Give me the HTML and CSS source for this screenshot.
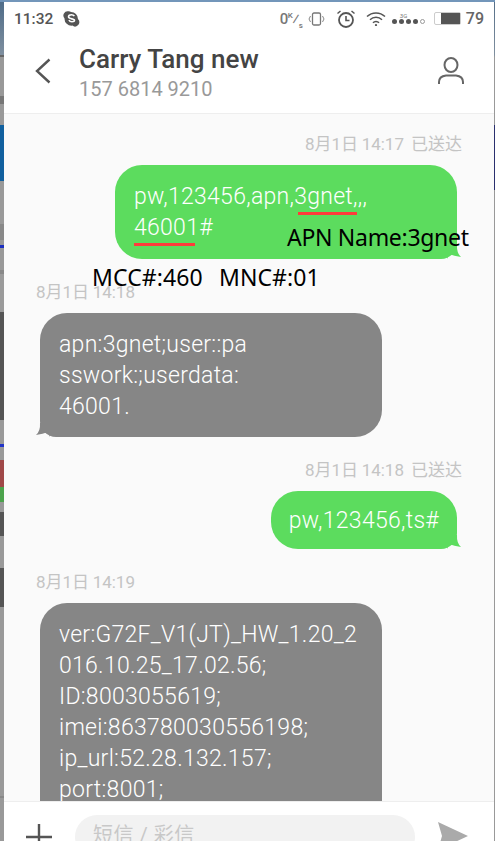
FILE: index.html
```html
<!DOCTYPE html>
<html lang="zh">
<head>
<meta charset="utf-8">
<title>Carry Tang new</title>
<link rel="stylesheet" href="styles.css">
</head>
<body>
<div class="desktop">
  <div class="edge edge-left"></div>
  <main class="phone">
    <div class="status">
      <span class="clock">11:32</span>
      <svg class="ic-skype" viewBox="0 0 16 16"><path d="M5 1.2a4 4 0 0 1 2.6.7 6.6 6.6 0 0 1 6.5 6.5 4 4 0 0 1-.1 6 4 4 0 0 1-5.200.3A6.600 6.600 0 0 1 1.400 7.800 4 4 0 0 1 5 1.200z" fill="#555"/><path d="M10.700 5.800C10 4.700 8.900 4.400 7.900 4.400c-1.500 0-2.700.8-2.700 2 0 2.500 5.600 1.400 5.600 3.300 0 .8-.9 1.300-2.400 1.300-1.300 0-2.300-.5-2.800-1.600" fill="none" stroke="#fff" stroke-width="1.500"/></svg>
      <span class="grow"></span>
      <span class="speed">0<sup>K</sup>⁄<sub>s</sub></span>
      <svg class="ic-vib" viewBox="0 0 17 14"><rect x="4.500" y="1" width="8" height="12" rx="1.500" fill="none" stroke="#777" stroke-width="1.300"/><path d="M2.500 4 1 7l1.500 3M14.500 4 16 7l-1.500 3" fill="none" stroke="#888"/></svg>
      <svg class="ic-alarm" viewBox="0 0 20 20"><circle cx="10" cy="11" r="7" fill="none" stroke="#555" stroke-width="1.800"/><path d="M10 7v4.500h3.500" fill="none" stroke="#555" stroke-width="1.600"/><path d="M1.500 4.500 4.500 2M18.500 4.500 15.500 2" stroke="#555" stroke-width="1.500"/></svg>
      <svg class="ic-wifi" viewBox="0 0 20 14"><path d="M1 4.500a13 13 0 0 1 18 0M4 7.800a8.500 8.500 0 0 1 12 0M7 10.800a4 4 0 0 1 6 0" fill="none" stroke="#555" stroke-width="1.500"/><circle cx="10" cy="13" r="1.100" fill="#555"/></svg>
      <span class="signal">
        <span class="net">3G</span>
        <span class="dots"><i class="dot"></i><i class="dot"></i><i class="dot"></i><i class="dot"></i><i class="dot dot-off"></i></span>
      </span>
      <span class="battery"><span class="battery-fill"></span></span>
      <span class="level">79</span>
    </div>
    <header class="head">
      <svg class="ic-back" viewBox="0 0 16 26"><path d="M14.500 1.500 2 13l12.500 11.500" fill="none" stroke="#555" stroke-width="2.400"/></svg>
      <div class="contact">
        <div class="name">Carry Tang new</div>
        <div class="number">157 6814 9210</div>
      </div>
      <svg class="ic-person" viewBox="0 0 26 28"><ellipse cx="13" cy="8" rx="6.500" ry="7" fill="none" stroke="#666" stroke-width="2"/><path d="M1 27v-2c0-4 3-6 7-6.500h10c4 .5 7 2.500 7 6.500v2" fill="none" stroke="#666" stroke-width="2"/></svg>
    </header>
    <section class="thread">
      <div class="stamp stamp-out">8月1日 14:17&nbsp; 已送达</div>
      <div class="bubble out wide">pw,123456,apn,3gnet,,,<br>46001#
        <svg class="tail tail-out" viewBox="0 0 14 14"><path d="M10 0Q9.500 8 14 12Q7 11 2 9L0 14V0z"/></svg>
      </div>
      <div class="stamp">8月1日 14:18</div>
      <div class="bubble in wide">apn:3gnet;user::pa<br>sswork:;userdata:<br>46001.
        <svg class="tail tail-in" viewBox="0 0 14 14"><path d="M4 0Q4.500 8 0 12Q7 11 12 9L14 14V0z"/></svg>
      </div>
      <div class="stamp stamp-out">8月1日 14:18&nbsp; 已送达</div>
      <div class="bubble out single">pw,123456,ts#
        <svg class="tail tail-out" viewBox="0 0 14 14"><path d="M10 0Q9.500 8 14 12Q7 11 2 9L0 14V0z"/></svg>
      </div>
      <div class="stamp">8月1日 14:19</div>
      <div class="bubble in wide">ver:G72F_V1(JT)_HW_1.20_2<br>016.10.25_17.02.56;<br>ID:8003055619;<br>imei:863780030556198;<br>ip_url:52.28.132.157;<br>port:8001;<br>&nbsp;</div>
    </section>
    <footer class="composer">
      <svg class="ic-plus" viewBox="0 0 26 26"><path d="M13 0v26M0 13h26" stroke="#555" stroke-width="2.400"/></svg>
      <div class="field">短信 / 彩信</div>
      <svg class="ic-send" viewBox="0 0 30 28"><path d="M0 0 30 14 0 28l4-14z" fill="#aaa"/></svg>
    </footer>
    <span class="mark mark-a"></span>
    <span class="mark mark-b"></span>
    <span class="note note-apn">APN Name:3gnet</span>
    <span class="note note-mcc">MCC#:460&nbsp; MNC#:01</span>
  </main>
  <div class="edge edge-right"></div>
</div>
</body>
</html>
```
FILE: styles.css
```css
html, body {
  margin: 0;
  height: 841px;
  overflow: hidden;
  background: #999;
}
.desktop {
  display: flex;
  height: 841px;
  padding-top: 2px;
  box-sizing: border-box;
  background: linear-gradient(#7396ba, #7396ba) top / 100% 2px no-repeat #999;
  font-family: Roboto, "Noto Sans CJK SC", sans-serif;
}
.edge {
  flex: none;
  align-self: stretch;
  margin-top: -2px;
}
.edge-left {
  width: 4px;
  background: linear-gradient(
    #6f93b8 0 2px, #4f6c88 2px, #7f8f9f 55px, #666 55px 57px, #999 57px 96px, #777 96px 104px, #999 104px 125px,
    #11609f 125px 181px, #999 181px 224px, #888 224px 240px, #999 240px 245px, #1c2fc0 245px 248px, #999 248px 270px,
    #888 270px 274px, #9a9a9a 274px 312px, #555 312px 420px, #999 420px 444px, #2233c8 444px 447px, #999 447px 460px,
    #a04848 460px 487px, #4ca34c 487px 502px, #999 502px 512px, #555 512px 536px, #999 536px 568px, #555 568px 607px,
    #999 607px 796px, #888 796px 798px, #999 798px
  );
}
.edge-right {
  width: 1px;
  background: linear-gradient(
    #6f93b8 0 2px, #566f88 2px, #7f8f9f 55px, #999 57px 125px, #2a2f6e 125px 190px, #999 190px
  );
}
.phone {
  position: relative;
  flex: 1;
  min-width: 0;
  display: flex;
  flex-direction: column;
  background: #fff;
}
.status {
  flex: none;
  height: 33px;
  display: flex;
  align-items: center;
  padding: 0 10px;
  color: #555;
}
.clock {
  font-size: 15.500px;
  font-weight: 500;
  margin-right: 10px;
}
.ic-skype { width: 17px; height: 17px; }
.grow { flex: 1; }
.speed {
  font-size: 15px;
  font-weight: 500;
  color: #777;
  letter-spacing: -.5px;
  width: 22px;
  white-space: nowrap;
}
.speed sup, .speed sub { font-size: 8px; line-height: 0; }
.ic-vib { width: 17px; height: 14px; margin-left: 6px; }
.ic-alarm { width: 20px; height: 20px; margin-left: 11px; }
.ic-wifi { width: 20px; height: 14px; margin-left: 10px; }
.signal {
  width: 35px;
  margin-left: 6px;
  display: flex;
  flex-direction: column;
  align-items: flex-start;
}
.net {
  font-size: 6px;
  line-height: 6px;
  margin-left: 8px;
  color: #777;
}
.dots { display: flex; gap: 2px; }
.dot {
  width: 5px;
  height: 5px;
  border-radius: 50%;
  background: #555;
  box-sizing: border-box;
}
.dot-off { background: #fff; border: 1px solid #999; }
.battery {
  width: 27px;
  height: 13px;
  margin-left: 7px;
  box-sizing: border-box;
  border: 1px solid #ccc;
  border-radius: 2px;
  display: flex;
  justify-content: flex-end;
}
.battery-fill { width: 19px; background: #555; }
.level {
  font-size: 16px;
  font-weight: 500;
  color: #666;
  margin-left: 5px;
}
.head {
  flex: none;
  height: 78px;
  display: flex;
  align-items: center;
  border-bottom: 1px solid #eee;
}
.ic-back { width: 16px; height: 26px; margin-left: 31px; margin-top: -6px; }
.contact { margin-left: 28px; flex: 1; }
.name {
  font-size: 26px;
  line-height: 30px;
  font-weight: 500;
  color: #444;
}
.number {
  font-size: 20px;
  line-height: 30px;
  color: #999;
}
.ic-person { width: 26px; height: 28px; margin-right: 30px; margin-top: -6px; }
.thread {
  flex: 1;
  min-height: 0;
  overflow: hidden;
  background: #fafafa;
  display: flex;
  flex-direction: column;
  align-items: flex-start;
  padding-top: 20px;
}
.stamp {
  flex: none;
  font-size: 17px;
  line-height: 20px;
  color: #c4c4c4;
  word-spacing: -.7px;
  margin: 0 0 11px 32px;
}
.stamp-out { align-self: flex-end; margin: 0 32px 11px 0; }
.bubble {
  flex: none;
  position: relative;
  box-sizing: border-box;
  font-size: 23px;
  font-weight: 300;
  letter-spacing: .28px;
  line-height: 31px;
  color: #fff;
  padding: 16px 19px;
  border-radius: 27px;
  margin-bottom: 23px;
}
.wide { width: 342px; }
.single { padding: 14px 18px 13px; }
.out {
  background: #5cdc5e;
  align-self: flex-end;
  margin-right: 37px;
  border-bottom-right-radius: 16px;
}
.in {
  background: #868686;
  margin-left: 36px;
  padding-bottom: 15px;
  border-bottom-left-radius: 16px;
}
.tail { position: absolute; width: 14px; height: 14px; bottom: 0; }
.tail-out { right: -4px; fill: #5cdc5e; }
.tail-in { left: -4px; fill: #868686; }
.composer {
  flex: none;
  height: 39px;
  overflow: hidden;
  border-top: 1px solid #eee;
  display: flex;
  align-items: flex-start;
  background: #fff;
}
.ic-plus { width: 26px; height: 26px; margin: 22px 0 0 22px; flex: none; }
.field {
  flex: none;
  width: 340px;
  height: 44px;
  margin: 13px 0 0 23px;
  padding: 7px 18px;
  box-sizing: border-box;
  border-radius: 22px;
  background: #f2f2f2;
  font-size: 20px;
  line-height: 26px;
  color: #c8c8c8;
  letter-spacing: .5px;
}
.ic-send { width: 30px; height: 28px; margin: 20px 0 0 23px; flex: none; }
.mark {
  position: absolute;
  height: 3px;
  background: #ff3b3b;
}
.mark-a { left: 130px; top: 241px; width: 61px; }
.mark-b { left: 294px; top: 210px; width: 59px; }
.note {
  position: absolute;
  font-family: "Noto Sans", sans-serif;
  font-size: 23px;
  line-height: 28px;
  color: #000;
  white-space: nowrap;
}
.note-apn { left: 283px; top: 221px; letter-spacing: -.3px; }
.note-mcc { left: 88px; top: 261px; letter-spacing: .1px; word-spacing: 2px; }
```
